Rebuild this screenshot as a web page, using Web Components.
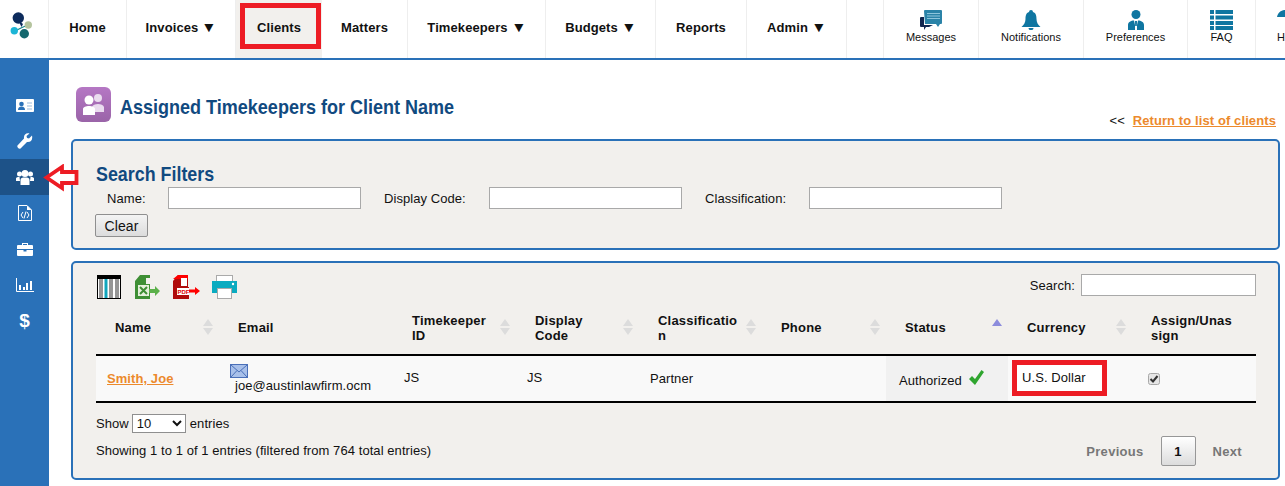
<!DOCTYPE html>
<html>
<head>
<meta charset="utf-8">
<title>Assigned Timekeepers</title>
<style>
html, body { margin: 0; height: 486px; overflow: hidden; background: #fff; font-family: "Liberation Sans", Arial, sans-serif; color: #111; }
</style>
</head>
<body>
<app-shell>
  <top-nav slot="top"></top-nav>
  <side-nav slot="side"></side-nav>
  <page-title>Assigned Timekeepers for Client Name</page-title>
  <search-filters></search-filters>
  <keeper-table></keeper-table>
</app-shell>

<script>
function define(name, html) {
  customElements.define(name, class extends HTMLElement {
    constructor() {
      super();
      const template = document.createElement("template");
      template.innerHTML = html;
      this.attachShadow({ mode: "open" }).appendChild(template.content.cloneNode(true));
    }
  });
}

define("app-shell", `
<style>
:host { display: grid; grid-template-columns: 49px 1fr; grid-template-rows: 60px 426px; width: 1285px; height: 486px; overflow: hidden; position: relative; }
.top { grid-column: 1 / 3; }
main { padding: 0 6px 0 22px; }
.arrow { position: absolute; left: 43px; top: 164px; }
</style>
<div class="top"><slot name="top"></slot></div>
<slot name="side"></slot>
<main><slot></slot></main>
<svg class="arrow" width="38" height="28" viewBox="0 0 38 28"><path d="M3.500 13.500 L19 3 V8 H33.500 V19 H19 V24 Z" fill="#fff" stroke="#ed1c24" stroke-width="3.800"/></svg>
`);

define("top-nav", `
<style>
:host { display: flex; height: 58px; border-bottom: 2px solid #2a71b8; background: #fff; overflow: hidden; position: relative; }
.logo { width: 48px; flex: none; border-right: 1px solid #eee; }
.logo svg { display: block; }
a { flex: none; box-sizing: border-box; display: flex; align-items: center; justify-content: center; gap: 4px; height: 58px; padding-bottom: 4px; border-right: 1px solid #eee; font-size: 13px; font-weight: bold; letter-spacing: .1px; color: #111; }
a span { font-size: 14px; line-height: 14px; transform: scale(1.1,1); }
a.on { background: #f2f0ed; position: relative; border-right: 0; }
a.on::after { content: ""; position: absolute; left: 4px; top: 3px; width: 71px; height: 36px; border: 5px solid #ed1c24; }
.gap { width: 36px; flex: none; border-right: 1px solid #eee; }
.ic { flex: none; box-sizing: border-box; height: 58px; border-right: 1px solid #eee; display: flex; flex-direction: column; align-items: center; padding-top: 10px; font-size: 11px; color: #111; }
.ic svg { height: 20px; display: block; margin-bottom: 1px; }
.ic.last { border: 0; }
</style>
<div class="logo">
  <svg width="48" height="58" viewBox="0 0 48 58">
    <path d="M18 20 L21.500 27 L23 24 Z" fill="#0d2b5c"/>
    <path d="M15 31 L22 27.500 L28 25" stroke="#14868e" stroke-width="1.200" fill="none"/>
    <circle cx="18.300" cy="18" r="5.700" fill="#0d2b5c"/>
    <circle cx="28.300" cy="25" r="3.700" fill="#b5c49e"/>
    <circle cx="14.300" cy="30.700" r="3.700" fill="#1cb5d6"/>
    <circle cx="24.300" cy="33.700" r="4.700" fill="#14686e"/>
  </svg>
</div>
<a style="width:78px">Home</a>
<a style="width:109px">Invoices <span>▼</span></a>
<a class="on" style="width:86px">Clients</a>
<a style="width:86px">Matters</a>
<a style="width:138px">Timekeepers <span>▼</span></a>
<a style="width:110px">Budgets <span>▼</span></a>
<a style="width:91px">Reports</a>
<a style="width:100px">Admin <span>▼</span></a>
<div class="gap"></div>
<div class="ic" style="width:95px">
  <svg width="22" height="20" viewBox="0 0 22 20"><path d="M4 1 a1 1 0 0 1 1 -1 H21 a1 1 0 0 1 1 1 V13 a1 1 0 0 1 -1 1 H20 L18 17 L16 14 H5 Z" fill="#2a83a8"/><path d="M7 3.500 H20 M7 6 H20 M7 8.500 H20" stroke="#8cc5dc" stroke-width="1"/><path d="M1 7 H4 V15 H13 L9 17 H6 L4 20 V17 H1 a1 1 0 0 1 -1 -1 V8 a1 1 0 0 1 1 -1 Z" fill="#12264f"/></svg>
  Messages
</div>
<div class="ic" style="width:105px">
  <svg width="20" height="20" viewBox="0 0 20 20"><path d="M10 0 a2 2 0 0 1 2 2 C15 3 15.500 6 15.500 9 C15.500 12 17 15 19.500 17 H.5 C3 15 4.500 12 4.500 9 C4.500 6 5 3 8 2 a2 2 0 0 1 2 -2 Z" fill="#0f76a1"/><path d="M7.500 18 H12.500 a2.500 2.200 0 0 1 -5 0 Z" fill="#0f76a1"/></svg>
  Notifications
</div>
<div class="ic" style="width:104px">
  <svg width="16" height="20" viewBox="0 0 16 20"><circle cx="8" cy="4.500" r="4.500" fill="#0f76a1"/><path d="M0 20 V15 C0 12 3 10.500 6 10.500 L7 15 V20 Z M16 20 V15 C16 12 13 10.500 10 10.500 L9 15 V20 Z" fill="#0f76a1"/><path d="M7 11 H9 L8.800 16 H7.200 Z" fill="#0f76a1"/></svg>
  Preferences
</div>
<div class="ic" style="width:68px">
  <svg width="23" height="20" viewBox="0 0 23 20"><path d="M0 0 H4 V4 H0 Z M0 5.500 H4 V9.500 H0 Z M0 11 H4 V15 H0 Z M0 16 H4 V20 H0 Z M5.500 0 H23 V4 H5.500 Z M5.500 5.500 H23 V9.500 H5.500 Z M5.500 11 H23 V15 H5.500 Z M5.500 16 H23 V20 H5.500 Z" fill="#0f76a1"/></svg>
  FAQ
</div>
<div class="ic last" style="width:40px;align-items:flex-start;padding-left:21px;">
  <svg width="16" height="20" viewBox="0 0 16 20"><path d="M0 7 C1 1 6 0 8 0 C10 0 15 1 16 7 Z" fill="#0f76a1"/></svg>
  Help
</div>
`);

define("side-nav", `
<style>
:host { display: flex; flex-direction: column; padding-top: 27px; background: #2a71b8; }
div { height: 36px; display: flex; align-items: center; justify-content: center; }
.on { background: #1d5288; }
svg { display: block; }
</style>
<div><svg width="18" height="13" viewBox="0 0 18 13"><rect width="18" height="13" rx="1" fill="#fff"/><circle cx="5.500" cy="5" r="2.300" fill="#2a71b8"/><path d="M2 11 a3.500 3.500 0 0 1 7 0 Z" fill="#2a71b8"/><path d="M11 4 H16 M11 7 H16 M11 10 H16" stroke="#9bbbdc"/></svg></div>
<div><svg width="16" height="17" viewBox="0 0 16 17"><path d="M15 2.500 L12 5.500 L10 5 L9.500 3 L12.500 .5 C9 -.5 6.500 2 7 5.500 L.5 12.500 C-.5 14 2 16.500 3.500 15.500 L10 9 C13.500 9.500 16 7 15 2.500 Z" fill="#fff"/></svg></div>
<div class="on"><svg width="18" height="16" viewBox="0 0 18 16"><circle cx="3.500" cy="5" r="2.500" fill="#fff"/><circle cx="14.500" cy="5" r="2.500" fill="#fff"/><path d="M0 12 V9.500 C0 8.500 1 8 3.500 8 L4 12 Z M18 12 V9.500 C18 8.500 17 8 14.500 8 L14 12 Z" fill="#fff"/><circle cx="9" cy="4.500" r="3.500" fill="#fff"/><path d="M4.500 16 V11 C4.500 9 6 8.500 9 8.500 C12 8.500 13.500 9 13.500 11 V16 Z" fill="#fff"/></svg></div>
<div><svg width="14" height="16" viewBox="0 0 14 16"><path d="M.5 .5 H9 L13.500 5 V15.500 H.5 Z" fill="#2a71b8" stroke="#fff"/><path d="M9 .5 V5 H13.500 Z" fill="#fff"/><path d="M5 7 L3 10 L5 13 M9 7 L11 10 L9 13 M8 6.500 L6 13.500" stroke="#fff" fill="none"/></svg></div>
<div><svg width="16" height="14" viewBox="0 0 16 14"><path d="M5 3 V1 H11 V3 H15 a1 1 0 0 1 1 1 V7 H0 V4 a1 1 0 0 1 1 -1 Z M6 2 V3 H10 V2 Z M0 8 H6.500 V9.500 H9.500 V8 H16 V13 a1 1 0 0 1 -1 1 H1 a1 1 0 0 1 -1 -1 Z" fill="#fff" fill-rule="evenodd"/></svg></div>
<div><svg width="18" height="14" viewBox="0 0 18 14"><path d="M.5 0 V13.500 H18" stroke="#fff" fill="none"/><path d="M3 7 H5 V12 H3 Z M7 9 H9 V12 H7 Z M10 5 H12 V12 H10 Z M14 3 H16 V12 H14 Z" fill="#fff"/></svg></div>
<div><span style="font:bold 19px 'Liberation Sans',Arial,sans-serif;color:#fff">$</span></div>
`);

define("page-title", `
<style>
:host { display: flex; align-items: flex-start; position: relative; height: 79px; margin-left: 5px; box-sizing: border-box; padding-top: 27px; }
svg { flex: none; }
h1 { margin: 8px 0 0 9px; font-size: 21px; line-height: 24px; font-weight: bold; color: #114a80; transform: scaleX(.858); transform-origin: left; white-space: nowrap; }
.back { position: absolute; right: 4px; top: 53px; font-size: 13px; letter-spacing: .1px; }
.back a { margin-left: 4px; color: #ec8a2d; font-weight: bold; text-decoration: underline; }
</style>
<svg width="35" height="35" viewBox="0 0 35 35">
  <defs><linearGradient id="g" x1="0" y1="0" x2="0" y2="1"><stop offset="0" stop-color="#b577c4"/><stop offset="1" stop-color="#9a64a8"/></linearGradient></defs>
  <rect width="35" height="35" rx="6" fill="url(#g)"/>
  <circle cx="22" cy="11" r="4" fill="#eadcef"/><path d="M16 20 C17 16 27 16 28 20 V25 H16 Z" fill="#eadcef"/>
  <circle cx="13" cy="13" r="4.500" fill="#fff"/><path d="M7 28 V22 C7 18 19 18 19 22 V28 Z" fill="#fff"/>
</svg>
<h1><slot></slot></h1>
<div class="back">&lt;&lt; <a>Return to list of clients</a></div>
`);

define("search-filters", `
<style>
:host { display: block; box-sizing: border-box; height: 111px; padding: 22px 23px 0; background: #f2f0ed; border: 2px solid #2a71b8; border-radius: 5px; }
h2 { margin: 0 0 1px; font-size: 21px; line-height: 22px; font-weight: bold; color: #114a80; transform: scaleX(.851); transform-origin: left; }
.row { display: flex; align-items: center; height: 24px; font-size: 13px; letter-spacing: .06px; color: #111; }
label { box-sizing: border-box; text-align: left; }
input { box-sizing: border-box; width: 193px; height: 22px; padding: 0; border: 1px solid #a9a9a9; background: #fff; }
button { display: block; margin: 4px 0 0 -1px; box-sizing: border-box; width: 53px; height: 23px; padding: 0; font: 14px "Liberation Sans", Arial, sans-serif; letter-spacing: .1px; color: #111; background: linear-gradient(#f4f4f4, #dcdcdc); border: 1px solid #8f8f8f; border-radius: 2px; }
</style>
<h2>Search Filters</h2>
<div class="row">
  <label style="width:72px;padding-left:11px">Name:</label><input>
  <label style="width:128px;padding-left:23px">Display Code:</label><input>
  <label style="width:127px;padding-left:23px">Classification:</label><input>
</div>
<button>Clear</button>
`);

define("keeper-table", `
<style>
:host { display: block; position: relative; box-sizing: border-box; height: 219px; margin-top: 11px; padding: 0 22px 0 23px; background: #f2f0ed; border: 2px solid #2a71b8; border-radius: 5px; font-size: 13px; letter-spacing: .07px; color: #111; }
.tools { display: flex; align-items: center; height: 44px; padding-top: 3px; box-sizing: border-box; }
.tools svg { display: block; flex: none; }
.search { margin-left: auto; display: flex; align-items: center; gap: 6px; margin-top: -3px; }
.search input { box-sizing: border-box; width: 175px; height: 22px; padding: 0; border: 1px solid #a9a9a9; background: #fff; }
.grid { display: grid; grid-template-columns: 123px 174px 123px 123px 123px 124px 122px 124px 124px; }
.th { position: relative; height: 47px; box-sizing: border-box; display: flex; align-items: center; padding: 0 0 6px 19px; font-size: 13px; line-height: 15px; font-weight: bold; letter-spacing: .2px; }
.th i { position: absolute; right: 6px; top: 12px; width: 0; border-left: 5px solid transparent; border-right: 5px solid transparent; border-bottom: 7px solid #dcdcdc; }
.th i::after { content: ""; position: absolute; left: -5px; top: 9px; border-left: 5px solid transparent; border-right: 5px solid transparent; border-top: 7px solid #dcdcdc; }
.th i.up { border-bottom-color: #8c8cdc; }
.th i.up::after { display: none; }
.body { grid-column: 1 / -1; display: grid; grid-template-columns: inherit; height: 49px; box-sizing: border-box; border-top: 2px solid #000; border-bottom: 2px solid #000; background: #f9f9f9; }
.td { display: flex; align-items: center; padding-left: 11px; box-sizing: border-box; }
.td a { color: #ec8a2d; font-weight: bold; text-decoration: underline; }
.sort { background: #f1f1f1; }
.mail { display: block; flex: none; }
.foot { display: flex; justify-content: space-between; margin-top: 11px; }
.foot select { font: 13px "Liberation Sans", Arial, sans-serif; width: 54px; height: 19px; margin: 0 4px 0 3px; background: #fff; border: 1px solid #8f8f8f; padding: 0; color: #111; }
.info { margin-top: 10px; }
.pager { display: flex; align-items: center; gap: 17px; height: 30px; margin: 22px 14px 0 0; font-size: 13px; font-weight: bold; letter-spacing: .3px; color: #777; }
.pager b { box-sizing: border-box; width: 35px; height: 30px; display: flex; align-items: center; justify-content: center; color: #111; background: linear-gradient(#fff, #dcdcdc); border: 1px solid #979797; border-radius: 2px; }
.usd { position: absolute; left: 939px; top: 97px; box-sizing: border-box; width: 95px; height: 36px; border: 5px solid #ed1c24; background: #fff; padding: 0 5px; line-height: 26px; }
</style>
<div class="tools">
  <svg style="margin-left:1px" width="24" height="24" viewBox="0 0 24 24"><rect x=".5" y=".5" width="23" height="23" fill="#fff" stroke="#000"/><rect width="24" height="4" fill="#000"/><path d="M2 4 H6 V23 H2 Z M12 4 H16 V23 H12 Z M18 4 H22 V23 H18 Z" fill="#969696"/><path d="M7.500 4 H10.500 V23 H7.500 Z" fill="#11a6bd"/></svg>
  <svg style="margin-left:14px" width="25" height="24" viewBox="0 0 25 24"><path d="M5 0 H15 V3 H11 V9 H15 V24 H0 V6 Z" fill="#3f8f35"/><rect x="3" y="10" width="11" height="11" fill="#e6f0dc"/><path d="M5 12 L12 19 M12 12 L5 19" stroke="#3f8f35" stroke-width="2"/><path d="M14 14 H20 V11 L25 16 L20 21 V18 H14 Z" fill="#5cb04a"/></svg>
  <svg style="margin-left:13px" width="27" height="24" viewBox="0 0 27 24"><path d="M5 0 H15 V12 H16 V24 H0 V6 Z" fill="#b00b0b"/><path d="M5 0 H15 V4 H0 Z" fill="#f00"/><path d="M8 3 H14 V11 H8 Z" fill="#fff"/><rect x="4" y="13" width="12" height="7" fill="#fff"/><text x="4.500" y="19" font-family="Liberation Sans" font-size="6" letter-spacing="0" font-weight="bold" fill="#d00">PDF</text><path d="M16 14.500 H22 V12 L27 16 L22 20 V17.500 H16 Z" fill="#f00"/></svg>
  <svg style="margin-left:12px" width="25" height="24" viewBox="0 0 25 24"><rect x="4.500" y=".5" width="16" height="6" fill="#fff" stroke="#aaa"/><path d="M0 6 H25 V18 H20 V13 H5 V18 H0 Z" fill="#0babc0"/><rect x="5.500" y="13.500" width="14" height="10" fill="#fff" stroke="#aaa"/><circle cx="21" cy="9" r="1.200" fill="#fff"/></svg>
  <div class="search">Search: <input></div>
</div>
<div class="grid">
  <div class="th">Name<i></i></div>
  <div class="th">Email</div>
  <div class="th"><span>Timekeeper<br>ID</span><i></i></div>
  <div class="th"><span>Display<br>Code</span><i></i></div>
  <div class="th"><span>Classificatio<br>n</span><i></i></div>
  <div class="th">Phone<i></i></div>
  <div class="th">Status<i class="up"></i></div>
  <div class="th">Currency<i></i></div>
  <div class="th"><span>Assign/Unas<br>sign</span></div>
  <div class="body">
    <div class="td"><a>Smith, Joe</a></div>
    <div class="td" style="flex-direction:column;align-items:flex-start;padding-top:8px">
      <svg class="mail" width="18" height="14" viewBox="0 0 18 14"><rect x=".5" y=".5" width="17" height="13" fill="#a8c0ea" stroke="#4a6fb8"/><path d="M1 1 L9 8 L17 1 M1 13 L7 6.500 M17 13 L11 6.500" stroke="#4a6fb8" fill="none"/></svg>
      <span style="margin-left:5px">joe@austinlawfirm.ocm</span>
    </div>
    <div class="td" style="padding-bottom:3px">JS</div>
    <div class="td" style="padding-bottom:3px">JS</div>
    <div class="td" style="padding-left:11px">Partner</div>
    <div class="td"></div>
    <div class="td sort" style="gap:7px;padding:3px 0 0 13px">Authorized
      <svg style="margin-top:-5px" width="15" height="15" viewBox="0 0 15 15"><path d="M0 9 L3 6 L6 9 L12.500 0 L15 2 L6 15 Z" fill="#2fa52f"/></svg>
    </div>
    <div class="td"></div>
    <div class="td" style="padding:0 0 0 16px"><svg width="12" height="12" viewBox="0 0 12 12"><rect x=".5" y=".5" width="11" height="11" rx="2" fill="#e6e6e6" stroke="#a8a8a8"/><path d="M2.500 6 L5 8.500 L9.500 3" stroke="#333" stroke-width="2" fill="none"/></svg></div>
  </div>
</div>
<div class="foot">
  <div>
    <div style="display:flex;align-items:center">Show <select><option>10</option></select> entries</div>
    <div class="info">Showing 1 to 1 of 1 entries (filtered from 764 total entries)</div>
  </div>
  <div class="pager"><span>Previous</span><b>1</b><span>Next</span></div>
</div>
<div class="usd">U.S. Dollar</div>
`);
</script>
</body>
</html>
